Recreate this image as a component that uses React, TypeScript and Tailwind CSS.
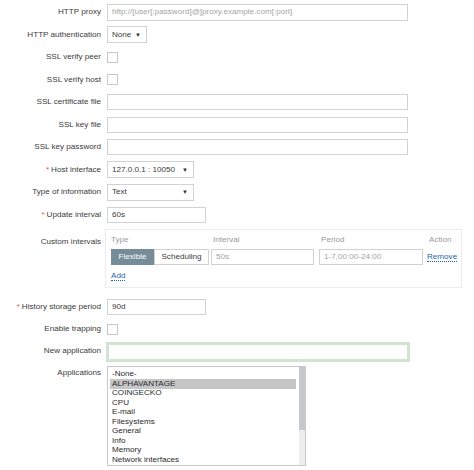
import React from 'react';

const font = "font-['Liberation_Sans',Arial,sans-serif]";

const apps = [
  '-None-',
  'ALPHAVANTAGE',
  'COINGECKO',
  'CPU',
  'E-mail',
  'Filesystems',
  'General',
  'Info',
  'Memory',
  'Network interfaces',
];

const Label = ({ text, required }: { text: string; required?: boolean }) => (
  <div className="w-[101px] shrink-0 text-right text-[#3b3b3b]">
    {required && <span className="mr-[2px] text-[#e0525c]">*</span>}
    {text}
  </div>
);

const Row = ({
  label,
  required,
  children,
}: {
  label: string;
  required?: boolean;
  children: React.ReactNode;
}) => (
  <div className="flex h-[22.5px] items-center">
    <Label text={label} required={required} />
    <div className="ml-[6px] flex items-center">{children}</div>
  </div>
);

const TextInput = ({
  width,
  value,
  placeholder,
  h = 'h-[16px]',
}: {
  width: string;
  value?: string;
  placeholder?: string;
  h?: string;
}) => (
  <div
    className={`${width} ${h} flex items-center border border-[#d2d2d2] bg-white px-[4px] ${
      placeholder ? 'text-[#a5a5a5]' : 'text-[#3b3b3b]'
    }`}
  >
    {value ?? placeholder}
  </div>
);

const Select = ({ width, value }: { width: string; value: string }) => (
  <div
    className={`${width} flex h-[17px] items-center justify-between border border-[#d2d2d2] bg-white pl-[4px] pr-[5px] text-[#3b3b3b]`}
  >
    <span>{value}</span>
    <span className="text-[6px] text-[#333]">▼</span>
  </div>
);

const Checkbox = () => (
  <div className="h-[11px] w-[11px] border border-[#c8c8c8] bg-white" />
);

export default function App() {
  return (
    <div className={`${font} h-[470px] w-[474px] bg-white pt-[1px] text-[8.1px] leading-none`}>
      <Row label="HTTP proxy">
        <TextInput width="w-[301px]" h="h-[17px]" placeholder="http://[user[:password]@]proxy.example.com[:port]" />
      </Row>
      <Row label="HTTP authentication">
        <Select width="w-[40px]" value="None" />
      </Row>
      <Row label="SSL verify peer">
        <Checkbox />
      </Row>
      <Row label="SSL verify host">
        <Checkbox />
      </Row>
      <Row label="SSL certificate file">
        <TextInput width="w-[301px]" />
      </Row>
      <Row label="SSL key file">
        <TextInput width="w-[301px]" />
      </Row>
      <Row label="SSL key password">
        <TextInput width="w-[301px]" />
      </Row>
      <Row label="Host interface" required>
        <Select width="w-[87px]" value="127.0.0.1 : 10050" />
      </Row>
      <Row label="Type of information">
        <Select width="w-[87px]" value="Text" />
      </Row>
      <Row label="Update interval" required>
        <TextInput width="w-[99px]" value="60s" />
      </Row>

      {/* custom intervals */}
      <div className="flex h-[69.5px] pt-[3px]">
        <div className="pt-[9px]">
          <Label text="Custom intervals" />
        </div>
        <div className="ml-[4px] h-[59px] w-[357px] border border-[#ececec] px-[5px] pt-[6px]">
          <div className="flex text-[#9a9a9a]">
            <div className="w-[102px]">Type</div>
            <div className="w-[108px]">Interval</div>
            <div className="w-[108px]">Period</div>
            <div>Action</div>
          </div>
          <div className="mt-[5px] flex items-center">
            <div className="flex h-[16px] w-[99px] pl-[0px]">
              <div className="flex w-[43px] items-center justify-center bg-[#768d99] text-white">Flexible</div>
              <div className="flex w-[55px] items-center justify-center border border-[#d2d2d2] text-[#3b3b3b]">
                Scheduling
              </div>
            </div>
            <div className="ml-[2px]">
              <TextInput width="w-[103px]" placeholder="50s" />
            </div>
            <div className="ml-[5px]">
              <TextInput width="w-[104px]" placeholder="1-7,00:00-24:00" />
            </div>
            <div className="ml-[4px] border-b border-dotted border-[#1f65a6] text-[#1f65a6]">Remove</div>
          </div>
          <div className="mt-[7px] inline-block border-b border-dotted border-[#1f65a6] text-[#1f65a6]">Add</div>
        </div>
      </div>

      <Row label="History storage period" required>
        <TextInput width="w-[99px]" value="90d" />
      </Row>
      <Row label="Enable trapping">
        <Checkbox />
      </Row>
      <div className="flex h-[22px] items-center">
        <Label text="New application" />
        <div className="ml-[5px] h-[20px] w-[304px] border-[3px] border-[#cfe4d1] bg-white" />
      </div>

      {/* applications */}
      <div className="mt-[3px] flex">
        <div className="pt-[3px]">
          <Label text="Applications" />
        </div>
        <div className="ml-[6px] flex h-[100px] w-[199px] border border-[#c8c8c8] bg-white">
          <div className="flex-1 pl-[2px] pt-[3px]">
            {apps.map((a, i) => (
              <div
                key={a}
                className={`flex h-[9.5px] items-center pl-[2px] text-[#2a2a2a] ${
                  i === 1 ? 'bg-[#c6c6c6]' : ''
                }`}
              >
                {a}
              </div>
            ))}
          </div>
          <div className="ml-[3px] flex w-[6px] flex-col bg-[#ededed]">
            <div className="h-[63px] bg-[#c5c9cc]" />
          </div>
        </div>
      </div>
    </div>
  );
}
